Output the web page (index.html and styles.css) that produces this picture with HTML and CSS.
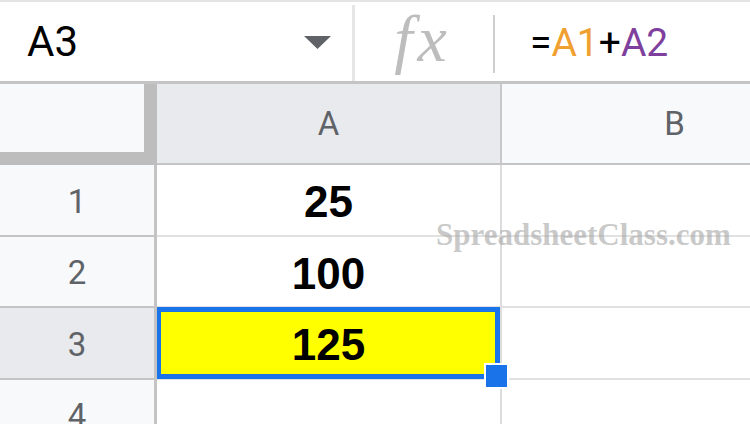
FILE: index.html
```html
<!DOCTYPE html>
<html>
<head>
<meta charset="utf-8">
<link rel="stylesheet" href="styles.css">
</head>
<body>
<div class="page">
  <div class="fbar">
    <div class="namebox">
      <span class="ref">A3</span>
      <svg class="caret" width="27" height="13" viewBox="0 0 27 13"><polygon points="0,0 27,0 13.5,13" fill="#5f6368"/></svg>
    </div>
    <div class="sep1"></div>
    <div class="fx">fx</div>
    <div class="sep2"></div>
    <div class="formula"><span class="eq">=</span><span class="r1">A1</span><span class="eq">+</span><span class="r2">A2</span></div>
  </div>
  <div class="sheet">
    <div class="corner"></div>
    <div class="colhead colA sel">A</div>
    <div class="colhead">B</div>

    <div class="rowhead">1</div>
    <div class="cell colA">25</div>
    <div class="cell"></div>

    <div class="rowhead">2</div>
    <div class="cell colA">100</div>
    <div class="cell"></div>

    <div class="rowhead sel">3</div>
    <div class="cell colA active">125<span class="outline"></span><span class="handle"></span></div>
    <div class="cell"></div>

    <div class="rowhead last">4</div>
    <div class="cell colA last"></div>
    <div class="cell last"></div>
  </div>
  <div class="watermark">SpreadsheetClass.com</div>
</div>
</body>
</html>
```

FILE: styles.css
```css
html, body {
  margin: 0;
  padding: 0;
  background: #fff;
}
body {
  width: 750px;
  height: 424px;
  overflow: hidden;
}
.page {
  position: relative;
  width: 750px;
  height: 424px;
  overflow: hidden;
  font-family: Roboto, "Liberation Sans", Arial, sans-serif;
}
.fbar {
  display: flex;
  height: 79px;
  border-top: 2px solid #e4e4e4;
  border-bottom: 3px solid #c4c4c4;
  background: #fff;
}
.namebox {
  width: 352px;
  box-sizing: border-box;
  display: flex;
  align-items: center;
  justify-content: space-between;
  padding-left: 27px;
  padding-right: 21px;
}
.ref {
  font-size: 42px;
  color: #000;
  line-height: 1;
}
.caret {
  display: block;
  margin-top: 2px;
}
.sep1 {
  width: 3px;
  margin: 3px 0 0;
  background: #e6e6e6;
}
.fx {
  width: 138px;
  display: flex;
  align-items: center;
  justify-content: center;
  font-family: "Liberation Serif", "Times New Roman", serif;
  font-style: italic;
  font-size: 66px;
  letter-spacing: 5px;
  color: #bdbdbd;
  line-height: 66px;
  padding-bottom: 6px;
  padding-right: 2px;
  box-sizing: border-box;
}
.sep2 {
  width: 2px;
  height: 58px;
  align-self: center;
  margin-top: 4px;
  background: #cfcfcf;
}
.formula {
  display: flex;
  align-items: center;
  padding-left: 35px;
  padding-top: 4px;
  font-size: 39px;
  line-height: 1;
}
.eq { color: #000; }
.r1 { color: #f0a030; }
.r2 { color: #7e3f9d; }

.sheet {
  display: grid;
  grid-template-columns: 157px 345px 345px;
  grid-template-rows: 81px 72px 71px 72px 60px;
  width: 847px;
}
.sheet > div {
  box-sizing: border-box;
  display: flex;
  align-items: center;
  justify-content: center;
}
.corner {
  background: #f8f9fa;
  border-right: 13px solid #bdbdbd;
  border-bottom: 13px solid #bdbdbd;
}
.colhead {
  background: #f8f9fa;
  border-bottom: 2px solid #c4c4c4;
  font-size: 33px;
  color: #5f6368;
}
.colhead.colA {
  border-right: 2px solid #c8c8c8;
}
.colhead.sel {
  background: #e8eaed;
}
.rowhead {
  background: #f8f9fa;
  border-right: 3px solid #c4c4c4;
  border-bottom: 2px solid #c4c4c4;
  font-size: 33px;
  color: #5f6368;
  padding-top: 2px;
}
.rowhead.sel {
  background: #e8eaed;
}
.cell {
  background: #fff;
  border-bottom: 2px solid #e1e1e1;
  font-family: "Liberation Sans", Arial, sans-serif;
  font-weight: bold;
  font-size: 44px;
  color: #000;
  padding-top: 4px;
}
.cell.colA {
  border-right: 2px solid #dcdcdc;
}
.rowhead.last, .cell.last {
  border-bottom: none;
  align-items: flex-start;
  padding-top: 16px;
}
.cell.active {
  position: relative;
  background: #ffff00;
}
.outline {
  position: absolute;
  left: 0;
  top: -1px;
  right: 0;
  bottom: -1px;
  border: 5px solid #1a73e8;
  border-left-width: 4px;
}
.handle {
  position: absolute;
  right: -7px;
  bottom: -9px;
  width: 21px;
  height: 22px;
  background: #1a73e8;
  box-shadow: 0 0 0 2px #fff;
}
.watermark {
  position: absolute;
  left: 436px;
  top: 219px;
  font-family: "Liberation Serif", "Times New Roman", serif;
  font-weight: bold;
  font-size: 31px;
  line-height: 31px;
  color: rgba(165, 165, 165, 0.6);
  white-space: nowrap;
}
```
